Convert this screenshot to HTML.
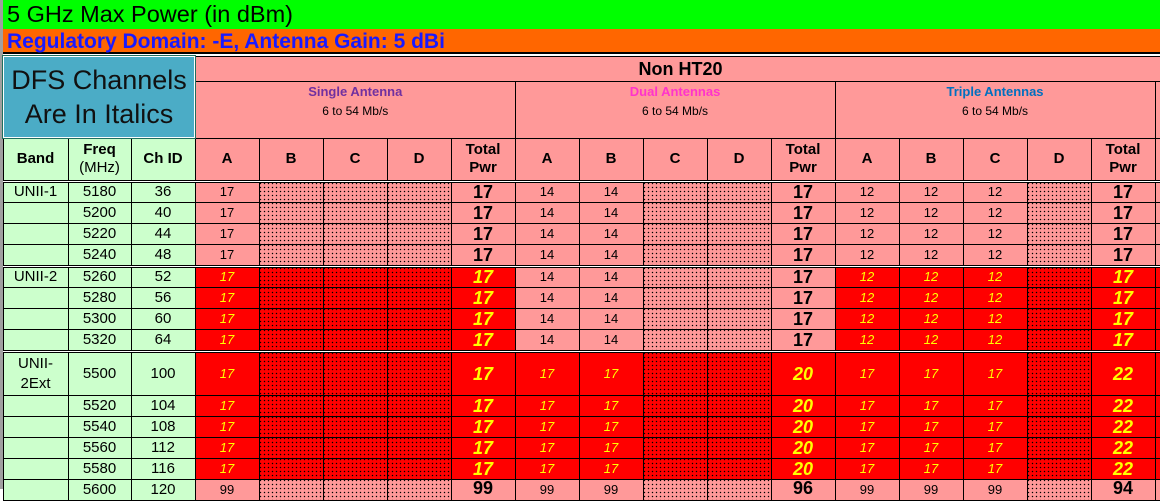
<!DOCTYPE html>
<html><head><meta charset="utf-8">
<style>
*{margin:0;padding:0;box-sizing:border-box}
body{width:1160px;height:489px;overflow:hidden;background:#fff;font-family:"Liberation Sans",Arial,sans-serif;position:relative}
.side{position:absolute;left:0;top:0;width:3px;height:489px;background:#a0a0a0}
.t1{position:absolute;left:3px;top:0;width:1157px;height:29px;background:#00ff00;font-size:23.5px;line-height:29px;padding-left:4px;color:#000}
.t2{position:absolute;left:3px;top:29px;width:1157px;height:25px;background:#ff6600;font-size:21px;font-weight:bold;color:#1a1aff;line-height:25px;padding-left:4px;border-bottom:2px solid #000}
table{position:absolute;left:2px;top:55px;border-collapse:collapse;table-layout:fixed;width:1162px}
td{border:1px solid #000;text-align:center;vertical-align:middle;overflow:hidden;white-space:nowrap;padding:0;line-height:16px}
.g{background:#ccffcc;font-size:15px}
.gh{background:#ccffcc;font-size:15px;font-weight:bold;line-height:18px}
.ph{background:#ff9999}
.h{background:#ff9999;font-weight:bold;font-size:15px;line-height:18px}
.p{background:#ff9999;font-size:13px}
.pt{background:#ff9999;font-size:18px;font-weight:bold}
.r{background:#ff0000;font-size:13px;font-style:italic;color:#ffff00}
.rt{background:#ff0000;font-size:18px;font-weight:bold;font-style:italic;color:#ffff00}
.pd{background-color:#ff9999;background-image:radial-gradient(circle at 1px 1px,#000 0.5px,transparent 0.9px);background-size:4px 4px}
.rd{background-color:#ff0000;background-image:radial-gradient(circle at 1px 1px,#000 0.5px,transparent 0.9px);background-size:4px 4px}
.dfs{background:#4bacc6;border:2px solid #fff;outline:1px solid #1f6f5f;font-size:27px;line-height:34px;white-space:normal;color:#111}
tr.dd td{border-bottom:3px double #000}
tr.d21 td{height:21px}
tr.d22 td{height:22px}
.gp{vertical-align:top;padding-top:0;font-size:12px;line-height:19px}
</style></head><body>
<div class="side"></div>
<div class="t1">5 GHz Max Power (in dBm)</div>
<div class="t2">Regulatory Domain: -E, Antenna Gain: 5 dBi</div>
<table>
<colgroup><col style="width:65px"><col style="width:63px"><col style="width:64px">
<col style="width:64px"><col style="width:64px"><col style="width:64px"><col style="width:64px"><col style="width:64px">
<col style="width:64px"><col style="width:64px"><col style="width:64px"><col style="width:64px"><col style="width:64px">
<col style="width:64px"><col style="width:64px"><col style="width:64px"><col style="width:64px"><col style="width:64px">
<col style="width:10px"></colgroup>
<tr style="height:25px"><td colspan="3" rowspan="2" class="dfs">DFS Channels<br>Are In Italics</td><td colspan="16" class="ph" style="font-weight:bold;font-size:18px;border-right:none">Non HT20</td></tr>
<tr style="height:57px">
<td colspan="5" class="ph gp"><b style="color:#7030a0;font-size:13px">Single Antenna</b><br>6 to 54 Mb/s</td>
<td colspan="5" class="ph gp"><b style="color:#ff33cc;font-size:13px">Dual Antennas</b><br>6 to 54 Mb/s</td>
<td colspan="5" class="ph gp"><b style="color:#0070c0;font-size:13px">Triple Antennas</b><br>6 to 54 Mb/s</td>
<td class="ph"></td></tr>
<tr class="dd" style="height:43px"><td class="gh">Band</td><td class="gh">Freq<br><span style="font-weight:normal">(MHz)</span></td><td class="gh">Ch ID</td>
<td class="h">A</td><td class="h">B</td><td class="h">C</td><td class="h">D</td><td class="h">Total<br>Pwr</td>
<td class="h">A</td><td class="h">B</td><td class="h">C</td><td class="h">D</td><td class="h">Total<br>Pwr</td>
<td class="h">A</td><td class="h">B</td><td class="h">C</td><td class="h">D</td><td class="h">Total<br>Pwr</td><td class="h"></td></tr>

<tr class="d21"><td class="g">UNII-1</td><td class="g">5180</td><td class="g">36</td><td class="p">17</td><td class="pd"></td><td class="pd"></td><td class="pd"></td><td class="pt">17</td><td class="p">14</td><td class="p">14</td><td class="pd"></td><td class="pd"></td><td class="pt">17</td><td class="p">12</td><td class="p">12</td><td class="p">12</td><td class="pd"></td><td class="pt">17</td><td class="p"></td></tr>
<tr class="d21"><td class="g"></td><td class="g">5200</td><td class="g">40</td><td class="p">17</td><td class="pd"></td><td class="pd"></td><td class="pd"></td><td class="pt">17</td><td class="p">14</td><td class="p">14</td><td class="pd"></td><td class="pd"></td><td class="pt">17</td><td class="p">12</td><td class="p">12</td><td class="p">12</td><td class="pd"></td><td class="pt">17</td><td class="p"></td></tr>
<tr class="d21"><td class="g"></td><td class="g">5220</td><td class="g">44</td><td class="p">17</td><td class="pd"></td><td class="pd"></td><td class="pd"></td><td class="pt">17</td><td class="p">14</td><td class="p">14</td><td class="pd"></td><td class="pd"></td><td class="pt">17</td><td class="p">12</td><td class="p">12</td><td class="p">12</td><td class="pd"></td><td class="pt">17</td><td class="p"></td></tr>
<tr class="d22 dd"><td class="g"></td><td class="g">5240</td><td class="g">48</td><td class="p">17</td><td class="pd"></td><td class="pd"></td><td class="pd"></td><td class="pt">17</td><td class="p">14</td><td class="p">14</td><td class="pd"></td><td class="pd"></td><td class="pt">17</td><td class="p">12</td><td class="p">12</td><td class="p">12</td><td class="pd"></td><td class="pt">17</td><td class="p"></td></tr>

<tr class="d21"><td class="g">UNII-2</td><td class="g">5260</td><td class="g">52</td><td class="r">17</td><td class="rd"></td><td class="rd"></td><td class="rd"></td><td class="rt">17</td><td class="p">14</td><td class="p">14</td><td class="pd"></td><td class="pd"></td><td class="pt">17</td><td class="r">12</td><td class="r">12</td><td class="r">12</td><td class="rd"></td><td class="rt">17</td><td class="r"></td></tr>
<tr class="d21"><td class="g"></td><td class="g">5280</td><td class="g">56</td><td class="r">17</td><td class="rd"></td><td class="rd"></td><td class="rd"></td><td class="rt">17</td><td class="p">14</td><td class="p">14</td><td class="pd"></td><td class="pd"></td><td class="pt">17</td><td class="r">12</td><td class="r">12</td><td class="r">12</td><td class="rd"></td><td class="rt">17</td><td class="r"></td></tr>
<tr class="d21"><td class="g"></td><td class="g">5300</td><td class="g">60</td><td class="r">17</td><td class="rd"></td><td class="rd"></td><td class="rd"></td><td class="rt">17</td><td class="p">14</td><td class="p">14</td><td class="pd"></td><td class="pd"></td><td class="pt">17</td><td class="r">12</td><td class="r">12</td><td class="r">12</td><td class="rd"></td><td class="rt">17</td><td class="r"></td></tr>
<tr class="d22 dd"><td class="g"></td><td class="g">5320</td><td class="g">64</td><td class="r">17</td><td class="rd"></td><td class="rd"></td><td class="rd"></td><td class="rt">17</td><td class="p">14</td><td class="p">14</td><td class="pd"></td><td class="pd"></td><td class="pt">17</td><td class="r">12</td><td class="r">12</td><td class="r">12</td><td class="rd"></td><td class="rt">17</td><td class="r"></td></tr>

<tr style="height:44px"><td class="g" style="white-space:normal;line-height:20px">UNII-<br>2Ext</td><td class="g">5500</td><td class="g">100</td><td class="r">17</td><td class="rd"></td><td class="rd"></td><td class="rd"></td><td class="rt">17</td><td class="r">17</td><td class="r">17</td><td class="rd"></td><td class="rd"></td><td class="rt">20</td><td class="r">17</td><td class="r">17</td><td class="r">17</td><td class="rd"></td><td class="rt">22</td><td class="r"></td></tr>
<tr class="d21"><td class="g"></td><td class="g">5520</td><td class="g">104</td><td class="r">17</td><td class="rd"></td><td class="rd"></td><td class="rd"></td><td class="rt">17</td><td class="r">17</td><td class="r">17</td><td class="rd"></td><td class="rd"></td><td class="rt">20</td><td class="r">17</td><td class="r">17</td><td class="r">17</td><td class="rd"></td><td class="rt">22</td><td class="r"></td></tr>
<tr class="d21"><td class="g"></td><td class="g">5540</td><td class="g">108</td><td class="r">17</td><td class="rd"></td><td class="rd"></td><td class="rd"></td><td class="rt">17</td><td class="r">17</td><td class="r">17</td><td class="rd"></td><td class="rd"></td><td class="rt">20</td><td class="r">17</td><td class="r">17</td><td class="r">17</td><td class="rd"></td><td class="rt">22</td><td class="r"></td></tr>
<tr class="d21"><td class="g"></td><td class="g">5560</td><td class="g">112</td><td class="r">17</td><td class="rd"></td><td class="rd"></td><td class="rd"></td><td class="rt">17</td><td class="r">17</td><td class="r">17</td><td class="rd"></td><td class="rd"></td><td class="rt">20</td><td class="r">17</td><td class="r">17</td><td class="r">17</td><td class="rd"></td><td class="rt">22</td><td class="r"></td></tr>
<tr class="d21"><td class="g"></td><td class="g">5580</td><td class="g">116</td><td class="r">17</td><td class="rd"></td><td class="rd"></td><td class="rd"></td><td class="rt">17</td><td class="r">17</td><td class="r">17</td><td class="rd"></td><td class="rd"></td><td class="rt">20</td><td class="r">17</td><td class="r">17</td><td class="r">17</td><td class="rd"></td><td class="rt">22</td><td class="r"></td></tr>
<tr class="d21"><td class="g">&nbsp;</td><td class="g" style="vertical-align:top;padding-top:2px">5600</td><td class="g" style="vertical-align:top;padding-top:2px">120</td><td class="p" style="vertical-align:top;padding-top:2px">99</td><td class="pd"></td><td class="pd"></td><td class="pd"></td><td class="pt" style="vertical-align:top">99</td><td class="p" style="vertical-align:top;padding-top:2px">99</td><td class="p" style="vertical-align:top;padding-top:2px">99</td><td class="pd"></td><td class="pd"></td><td class="pt" style="vertical-align:top">96</td><td class="p" style="vertical-align:top;padding-top:2px">99</td><td class="p" style="vertical-align:top;padding-top:2px">99</td><td class="p" style="vertical-align:top;padding-top:2px">99</td><td class="pd"></td><td class="pt" style="vertical-align:top">94</td><td class="p"></td></tr>
</table>
</body></html>
